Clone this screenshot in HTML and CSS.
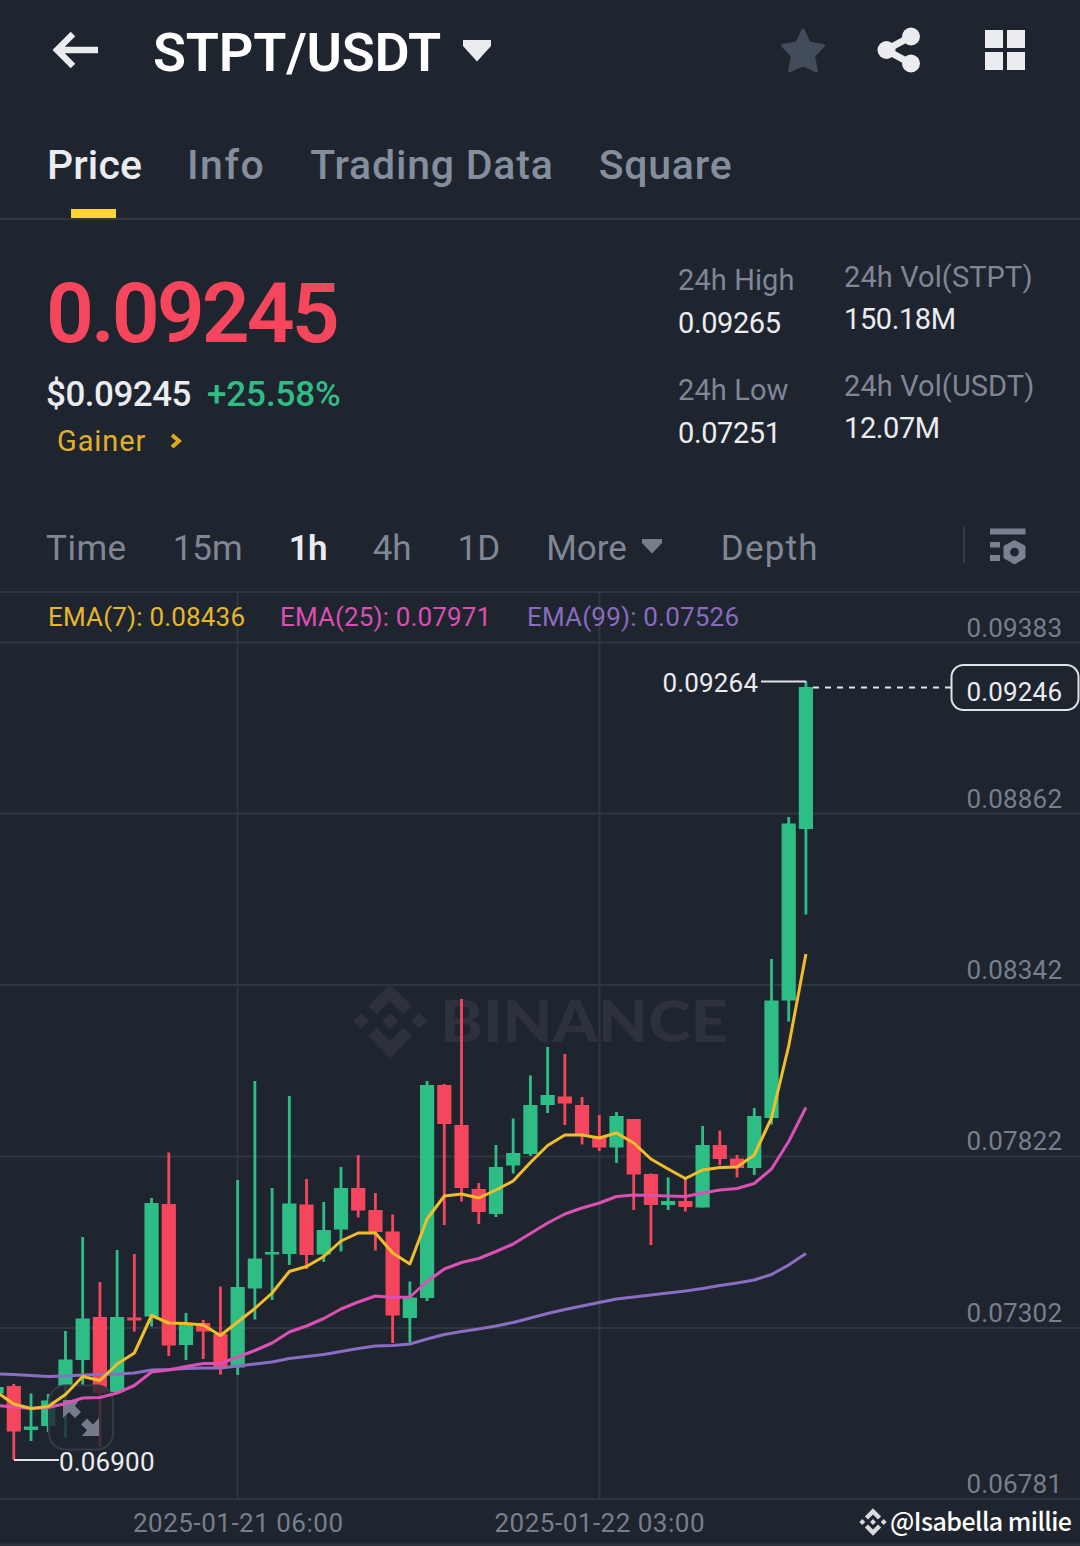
FILE: index.html
```html
<!DOCTYPE html>
<html lang="en">
<head>
    <meta charset="UTF-8">
    <meta name="viewport" content="width=device-width, initial-scale=1.0">
    <title>STPT/USDT</title>
    <link rel="stylesheet" href="styles.css">
</head>
<body>
<header class="header">
    <svg class="back" width="46" height="38" viewBox="0 0 46 38">
        <path d="M21 3 L5 19 L21 35 M5 19 H46" fill="none" stroke="#eaecef" stroke-width="6.4"/>
    </svg>
    <h1>STPT/USDT</h1>
    <svg class="caret" width="28" height="22" viewBox="0 0 28 22">
        <path d="M0 0 H28 V6 L14 21.5 L0 6 Z" fill="#eaecef"/>
    </svg>
    <div class="actions">
        <svg width="46" height="46" viewBox="0 0 46 46">
            <path d="M23 3 L29 16 L43.500 18.500 L33.500 29 L36.500 44 L23 38 L9.500 44 L12.500 29 L2.500 18.500 L17 16 Z" fill="#434c5a" stroke="#434c5a" stroke-width="3" stroke-linejoin="round"/>
        </svg>
        <svg width="44" height="46" viewBox="0 0 44 46">
            <path d="M34 9.500 L9 23 L34 36.500" fill="none" stroke="#eaecef" stroke-width="7"/>
            <circle cx="34" cy="9.500" r="9" fill="#eaecef"/>
            <circle cx="9.500" cy="23" r="9" fill="#eaecef"/>
            <circle cx="34" cy="36.500" r="9" fill="#eaecef"/>
        </svg>
        <svg width="40" height="40" viewBox="0 0 40 40">
            <path d="M0 0 H18 V18 H0 Z M22 0 H40 V18 H22 Z M0 22 H18 V40 H0 Z M22 22 H40 V40 H22 Z" fill="#eaecef"/>
        </svg>
    </div>
</header>

<nav class="tabs">
    <a class="tab active">Price</a>
    <a class="tab info">Info</a>
    <a class="tab">Trading Data</a>
    <a class="tab">Square</a>
</nav>

<section class="summary">
    <div class="quote">
        <div class="price">0.09245</div>
        <div class="change"><span class="fiat">$0.09245</span><span class="percent">+25.58%</span></div>
        <div class="tag">
            <span>Gainer</span>
            <svg width="12" height="16" viewBox="0 0 12 16">
                <path d="M2 2 L9 8 L2 14" fill="none" stroke="#e0ab1a" stroke-width="4"/>
            </svg>
        </div>
    </div>
    <div class="stats high-low">
        <div class="stat"><div class="label">24h High</div><div class="value">0.09265</div></div>
        <div class="stat"><div class="label">24h Low</div><div class="value">0.07251</div></div>
    </div>
    <div class="stats volume">
        <div class="stat"><div class="label">24h Vol(STPT)</div><div class="value">150.18M</div></div>
        <div class="stat"><div class="label">24h Vol(USDT)</div><div class="value">12.07M</div></div>
    </div>
</section>

<div class="intervals">
    <span class="time">Time</span>
    <span>15m</span>
    <span class="selected">1h</span>
    <span>4h</span>
    <span>1D</span>
    <span class="more">More
        <svg width="20" height="15" viewBox="0 0 20 15"><path d="M0 0 H20 V4 L10 14.500 L0 4 Z" fill="#767e8d"/></svg>
    </span>
    <span class="depth">Depth</span>
    <div class="settings">
        <svg width="36" height="37" viewBox="0 0 36 37">
            <path d="M0 0.500 H35.500 V6.500 H0 Z M0 14 H10 V19.500 H0 Z M0 27 H10 V33 H0 Z" fill="#7a8292"/>
            <path d="M24.500 12 L35.500 18 V30 L24.500 36.500 L13.500 30 V18 Z M24.500 19.800 A4.400 4.400 0 1 0 24.500 28.600 A4.400 4.400 0 1 0 24.500 19.800 Z" fill="#7a8292" fill-rule="evenodd"/>
        </svg>
    </div>
</div>

<svg class="chart" width="1080" height="955" viewBox="0 591 1080 955">
    <g class="grid">
        <path d="M0 592 H1080 M0 642.500 H1080 M0 813.500 H1080 M0 985 H1080 M0 1156.500 H1080 M0 1328 H1080 M0 1499 H1080 M0 1544.500 H1080"/>
        <path d="M237.500 592 V1499 M599.500 592 V1499"/>
    </g>

    <g class="brand">
        <path id="logo" d="M390 984 L412 1006 L403.500 1014.500 L390 1001 L376.500 1014.500 L368 1006 Z M353 1021 L361 1013 L369 1021 L361 1029 Z M382 1021 L390 1013 L398 1021 L390 1029 Z M411 1021 L419 1013 L427 1021 L419 1029 Z M390 1058 L368 1036 L376.500 1027.500 L390 1041 L403.500 1027.500 L412 1036 Z"/>
        <text x="440" y="1042" textLength="288" lengthAdjust="spacingAndGlyphs">BINANCE</text>
    </g>

    <g id="candles"></g>

    <rect class="expand" x="49" y="1385.500" width="64" height="64" rx="16"/>
    <path d="M63 1400 H79 L75 1406 L81 1412 L75 1418 L69 1412 L63 1418 Z M99 1436 H82 L87 1430 L81 1424.500 L87 1418.500 L93 1424.500 L99 1418 Z" fill="#747c8b"/>

    <g id="averages"></g>

    <g class="legend">
        <text class="ema7" x="48" y="626" textLength="197">EMA(7): 0.08436</text>
        <text class="ema25" x="280" y="626" textLength="211">EMA(25): 0.07971</text>
        <text class="ema99" x="527" y="626" textLength="212">EMA(99): 0.07526</text>
    </g>

    <g class="axis">
        <text x="966.500" y="637" textLength="95.500">0.09383</text>
        <text x="966.500" y="808" textLength="95.500">0.08862</text>
        <text x="966.500" y="979" textLength="95.500">0.08342</text>
        <text x="966.500" y="1150" textLength="95.500">0.07822</text>
        <text x="966.500" y="1322" textLength="95.500">0.07302</text>
        <text x="966.500" y="1493" textLength="95.500">0.06781</text>
        <text x="133" y="1532" textLength="210">2025-01-21 06:00</text>
        <text x="494.500" y="1532" textLength="210">2025-01-22 03:00</text>
    </g>

    <g class="marks">
        <path d="M761 681.500 H806 M14 1460 H59"/>
        <path d="M813 687.500 H951" stroke-dasharray="6 6"/>
        <rect x="951.500" y="665" width="127" height="45" rx="12"/>
        <text x="662.500" y="692" textLength="95.500">0.09264</text>
        <text x="966.500" y="701" textLength="95.500">0.09246</text>
        <text x="59" y="1471" textLength="95.500">0.06900</text>
    </g>

    <g class="author">
        <use href="#logo" transform="translate(873 1522) scale(0.37) translate(-390 -1021)"/>
        <text x="890" y="1531" textLength="182">@Isabella millie</text>
    </g>
</svg>

<script src="chart.js"></script>
</body>
</html>
```

FILE: styles.css
```css
body {
    margin: 0;
    width: 1080px;
    height: 1546px;
    overflow: hidden;
    background-color: #1f252f;
    color: #eaecef;
    font-family: Roboto, "Liberation Sans", sans-serif;
}

svg {
    display: block;
    flex: none;
}

.header {
    display: flex;
    align-items: center;
    height: 100px;
    padding: 0 55px 0 52px;
}

.header h1 {
    margin: 5px 0 0 55px;
    font-size: 54px;
    line-height: 64px;
    font-weight: 600;
    letter-spacing: -0.2px;
    color: #fff;
}

.header .caret {
    margin: 2px 0 0 22px;
}

.actions {
    display: flex;
    align-items: center;
    margin-left: auto;
}

.actions svg:nth-child(2) {
    margin: 0 64px 0 51px;
}

.tabs {
    display: flex;
    gap: 45px;
    height: 118px;
    padding-left: 47px;
    border-bottom: 2px solid #303742;
}

.tab {
    position: relative;
    padding-top: 35px;
    font-size: 41px;
    line-height: 60px;
    font-weight: 500;
    letter-spacing: 0.8px;
    color: #848e9c;
}

.tab.active {
    letter-spacing: 0.1px;
    color: #eaecef;
}

.tab.info {
    letter-spacing: 1.5px;
}

.tab.active::after {
    content: "";
    position: absolute;
    left: 24px;
    bottom: 0;
    width: 45px;
    height: 9px;
    background-color: #fcd535;
}

.summary {
    display: flex;
    height: 284px;
}

.quote {
    width: 632px;
    padding: 52px 0 0 46px;
}

.price {
    font-size: 84px;
    line-height: 84px;
    font-weight: 600;
    letter-spacing: -3px;
    color: #f6465d;
}

.change {
    display: flex;
    gap: 16px;
    margin-top: 14px;
    font-size: 35px;
    line-height: 50px;
    font-weight: 500;
}

.fiat {
    letter-spacing: -0.5px;
}

.percent {
    letter-spacing: -0.1px;
    color: #2ebd85;
}

.tag {
    display: flex;
    align-items: center;
    gap: 24px;
    margin-top: -1px;
    padding-left: 11px;
    font-size: 29px;
    line-height: 44px;
    letter-spacing: 0.9px;
    color: #e0b02a;
}

.stats {
    display: flex;
    flex-direction: column;
    font-size: 29px;
    line-height: 42px;
    white-space: nowrap;
}

.high-low {
    gap: 26px;
    width: 166px;
    padding-top: 39px;
}

.volume {
    gap: 25px;
    padding-top: 36px;
}

.stats .label {
    letter-spacing: 0.1px;
    color: #7f8795;
}

.stats .value {
    letter-spacing: -0.4px;
}

.high-low .value {
    padding-top: 1px;
    margin-bottom: -1px;
}

.intervals {
    display: flex;
    align-items: center;
    gap: 46px;
    height: 85px;
    padding: 2px 54px 0 46px;
    font-size: 35px;
    color: #7f8795;
}

.intervals .time {
    letter-spacing: 0.5px;
}

.intervals .selected {
    font-weight: 600;
    letter-spacing: -0.8px;
    color: #eaecef;
}

.intervals .more {
    display: flex;
    align-items: center;
    gap: 15px;
}

.intervals .more svg {
    margin-bottom: 4px;
}

.intervals .depth {
    margin-left: 13px;
    letter-spacing: 1.2px;
}

.settings {
    display: flex;
    align-items: center;
    height: 36px;
    margin: 0 0 8px auto;
    padding-left: 25px;
    border-left: 2px solid #343b47;
}

.settings svg {
    margin-top: 3px;
}

.grid {
    fill: none;
    stroke: #303641;
    stroke-width: 2;
}

.brand {
    fill: #2c313c;
    font-family: Lato, sans-serif;
    font-size: 57px;
    font-weight: 900;
}

.up {
    fill: #2ebd85;
}

.down {
    fill: #f6465d;
}

.expand {
    fill: #1f252f;
    fill-opacity: 0.8;
    stroke: #343b47;
    stroke-width: 2;
}

#averages polyline {
    fill: none;
    stroke-width: 3;
    stroke-linejoin: round;
}

.legend,
.axis,
.marks {
    font-size: 26px;
}

.ema7 {
    fill: #e8b62c;
}

.ema25 {
    fill: #d94fb3;
}

.ema99 {
    fill: #8a6bc0;
}

.axis {
    fill: #787f8c;
}

.marks path,
.marks rect {
    fill: none;
    stroke: #dfe2e6;
    stroke-width: 2;
}

.marks text {
    fill: #eaecef;
}

.author {
    fill: #d9dadc;
    font-family: "Noto Sans CJK SC", sans-serif;
    font-size: 25px;
    font-weight: 500;
}

.author text {
    fill: #fff;
}
```

FILE: chart.js
```js
const SVG = "http://www.w3.org/2000/svg";
const STEP = 17.22;
const FIRST = 13.8;

// side, high, body top, body bottom, low
const candles = [
    ["up", 1387, 1387, 1393.5, 1393.5],
    ["down", 1384, 1386, 1431.5, 1460],
    ["up", 1393.5, 1426.5, 1430, 1441],
    ["up", 1394, 1400.5, 1426, 1432],
    ["up", 1331, 1359.5, 1386, 1438],
    ["up", 1237, 1318.5, 1360, 1385],
    ["down", 1282, 1317, 1393, 1447],
    ["up", 1250, 1317, 1392, 1393],
    ["down", 1254, 1317.5, 1320.5, 1331.5],
    ["up", 1198, 1203, 1316.5, 1326.5],
    ["down", 1152.5, 1204, 1345.5, 1356],
    ["up", 1313, 1323.5, 1345, 1360],
    ["down", 1320, 1323, 1331.5, 1359],
    ["down", 1286.5, 1334, 1367, 1374.5],
    ["up", 1180, 1287, 1367.5, 1375],
    ["up", 1081, 1258.5, 1288.5, 1319.5],
    ["up", 1188, 1252, 1254.5, 1300],
    ["up", 1096, 1203.5, 1254, 1265],
    ["down", 1179, 1204.5, 1255, 1269],
    ["up", 1202, 1230, 1254.5, 1262],
    ["up", 1167, 1188, 1229.5, 1251.5],
    ["down", 1155, 1188, 1210.5, 1217.5],
    ["down", 1193, 1210, 1232, 1250.5],
    ["down", 1214.5, 1231.5, 1315.5, 1343],
    ["up", 1281.5, 1297.5, 1318, 1342.5],
    ["up", 1081, 1085, 1298, 1301],
    ["down", 1084, 1085, 1124, 1225],
    ["down", 999, 1125, 1188, 1201.5],
    ["down", 1183, 1189, 1212, 1224],
    ["up", 1145, 1167, 1214, 1217],
    ["up", 1118.5, 1153, 1165.5, 1173.5],
    ["up", 1075.5, 1105, 1154, 1156],
    ["up", 1047, 1095, 1105, 1113],
    ["down", 1054, 1096.5, 1103.5, 1125],
    ["down", 1097, 1105, 1136, 1144.5],
    ["down", 1115, 1136, 1147.5, 1151],
    ["up", 1112, 1116, 1147.5, 1163],
    ["down", 1119, 1119, 1174.5, 1210],
    ["down", 1173.5, 1174, 1205, 1245],
    ["up", 1177.5, 1201, 1205, 1210],
    ["down", 1179, 1201, 1207, 1211.5],
    ["up", 1126, 1145, 1207.5, 1207.5],
    ["down", 1130.5, 1145, 1159, 1165],
    ["down", 1155, 1158.5, 1168, 1177.5],
    ["up", 1108, 1116, 1168, 1175],
    ["up", 959, 1000.5, 1118, 1124.5],
    ["up", 817, 823.5, 1000.5, 1021.5],
    ["up", 681, 687, 829, 914.5]
];

const averages = {
    "#f0be2c": [1392, 1404, 1408.5, 1406.5, 1394.5, 1376.5, 1380.5, 1364, 1353, 1315.5, 1323, 1323.5, 1325, 1335.5, 1322,
        1308.5, 1293, 1271.5, 1266.5, 1256.5, 1241, 1233, 1233, 1253, 1264, 1219, 1196, 1194, 1198, 1190, 1181,
        1162.5, 1145.5, 1135, 1135, 1138, 1133, 1143, 1159, 1169, 1178.5, 1170, 1167.5, 1167, 1155, 1118, 1046, 954],
    "#dc50b5": [1405.5, 1407, 1408.5, 1407.5, 1403.5, 1398, 1397.5, 1393, 1385.5, 1372, 1370, 1366.5, 1363.5, 1363.5, 1357,
        1350.5, 1343, 1332, 1326, 1318.5, 1309, 1302, 1296, 1297.5, 1297, 1281.5, 1269, 1262.5, 1258.5, 1251.5, 1244,
        1233.5, 1223, 1214, 1208, 1203, 1196.5, 1195, 1195.5, 1196, 1196.5, 1193, 1190, 1188.5, 1183.5, 1169, 1141.5, 1107.5],
    "#8b6dc4": [1374, 1374.5, 1375.5, 1376.5, 1376, 1375, 1374.5, 1374, 1373, 1370, 1369.5, 1368.5, 1368, 1368, 1366,
        1364, 1362, 1358.5, 1356.5, 1354.5, 1351.5, 1348.5, 1346, 1345.5, 1344, 1339, 1334.5, 1331.5, 1329, 1326, 1322.5,
        1318, 1313.5, 1309.5, 1306, 1302.5, 1299, 1297, 1295, 1293, 1291, 1288.5, 1285.5, 1283, 1280, 1274.5, 1265, 1253.5]
};

function x(i) {
    return FIRST + (i - 1) * STEP;
}

function rect(parent, left, top, width, height, side) {
    const el = document.createElementNS(SVG, "rect");
    el.setAttribute("x", left);
    el.setAttribute("y", top);
    el.setAttribute("width", width);
    el.setAttribute("height", height);
    el.setAttribute("class", side);
    parent.appendChild(el);
}

const candleGroup = document.getElementById("candles");
candles.forEach(([side, high, top, bottom, low], i) => {
    rect(candleGroup, x(i) - 1.4, high, 2.8, low - high, side);
    rect(candleGroup, x(i) - 7.1, top, 14.2, bottom - top, side);
});

const averageGroup = document.getElementById("averages");
Object.entries(averages).reverse().forEach(([color, values]) => {
    const line = document.createElementNS(SVG, "polyline");
    line.setAttribute("points", values.map((y, i) => `${x(i)},${y}`).join(" "));
    line.setAttribute("stroke", color);
    averageGroup.appendChild(line);
});
```
